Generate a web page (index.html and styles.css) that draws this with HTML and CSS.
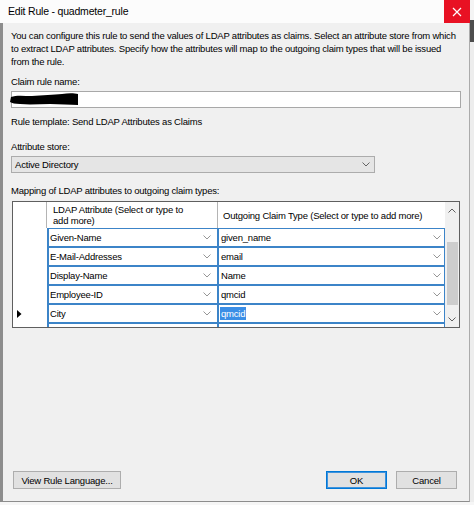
FILE: index.html
```html
<!DOCTYPE html>
<html>
<head>
<meta charset="utf-8">
<link rel="stylesheet" href="styles.css">
</head>
<body>
<div class="window">
  <div class="titlebar">
    <span class="title">Edit Rule - quadmeter_rule</span>
    <div class="close"><svg width="10" height="10" viewBox="0 0 10 10"><path d="M1 1L9 9M9 1L1 9" stroke="#fff" stroke-width="1.2" fill="none"/></svg></div>
  </div>
  <div class="content">
    <p class="desc">You can configure this rule to send the values of LDAP attributes as claims. Select an attribute store from which<br>to extract LDAP attributes. Specify how the attributes will map to the outgoing claim types that will be issued<br>from the rule.</p>
    <p class="lbl m7">Claim rule name:</p>
    <div class="textbox"><svg class="redact" width="69" height="13" viewBox="0 0 69 13"><path d="M1 4 C6 2 14 3 22 3 C32 2 44 2 52 1 C58 0 64 0 68 1 L68 12 C60 12 50 11 40 11 C30 11 20 12 10 11 C5 11 2 10 0 9 Z" fill="#000"/></svg></div>
    <p class="lbl m7">Rule template: Send LDAP Attributes as Claims</p>
    <p class="lbl m12">Attribute store:</p>
    <div class="combo"><span>Active Directory</span><svg class="chev" width="8" height="5" viewBox="0 0 8 5"><path d="M0.5 0.5L4 4L7.5 0.5"/></svg></div>
    <p class="lbl m11">Mapping of LDAP attributes to outgoing claim types:</p>
    <div class="grid">
      <div class="grid-main">
        <div class="head">
          <div class="hcell hrow"></div>
          <div class="hcell hldap">LDAP Attribute (Select or type to<br>add more)</div>
          <div class="hcell hclaim">Outgoing Claim Type (Select or type to add more)</div>
        </div>
        <div class="row">
          <div class="rh"></div>
          <div class="cell ldap"><span>Given-Name</span><svg class="chev" width="8" height="5" viewBox="0 0 8 5"><path d="M0.5 0.5L4 4L7.5 0.5"/></svg></div>
          <div class="cell claim"><span>given_name</span><svg class="chev" width="8" height="5" viewBox="0 0 8 5"><path d="M0.5 0.5L4 4L7.5 0.5"/></svg></div>
        </div>
        <div class="row">
          <div class="rh"></div>
          <div class="cell ldap"><span>E-Mail-Addresses</span><svg class="chev" width="8" height="5" viewBox="0 0 8 5"><path d="M0.5 0.5L4 4L7.5 0.5"/></svg></div>
          <div class="cell claim"><span>email</span><svg class="chev" width="8" height="5" viewBox="0 0 8 5"><path d="M0.5 0.5L4 4L7.5 0.5"/></svg></div>
        </div>
        <div class="row">
          <div class="rh"></div>
          <div class="cell ldap"><span>Display-Name</span><svg class="chev" width="8" height="5" viewBox="0 0 8 5"><path d="M0.5 0.5L4 4L7.5 0.5"/></svg></div>
          <div class="cell claim"><span>Name</span><svg class="chev" width="8" height="5" viewBox="0 0 8 5"><path d="M0.5 0.5L4 4L7.5 0.5"/></svg></div>
        </div>
        <div class="row">
          <div class="rh"></div>
          <div class="cell ldap"><span>Employee-ID</span><svg class="chev" width="8" height="5" viewBox="0 0 8 5"><path d="M0.5 0.5L4 4L7.5 0.5"/></svg></div>
          <div class="cell claim"><span>qmcid</span><svg class="chev" width="8" height="5" viewBox="0 0 8 5"><path d="M0.5 0.5L4 4L7.5 0.5"/></svg></div>
        </div>
        <div class="row">
          <div class="rh"><svg width="5" height="8" viewBox="0 0 5 8"><path d="M0 0L4.5 4L0 8Z" fill="#000"/></svg></div>
          <div class="cell ldap"><span>City</span><svg class="chev" width="8" height="5" viewBox="0 0 8 5"><path d="M0.5 0.5L4 4L7.5 0.5"/></svg></div>
          <div class="cell claim"><span class="sel">qmcid</span><svg class="chev" width="8" height="5" viewBox="0 0 8 5"><path d="M0.5 0.5L4 4L7.5 0.5"/></svg></div>
        </div>
        <div class="row">
          <div class="rh"></div>
          <div class="cell ldap"></div>
          <div class="cell claim"></div>
        </div>
      </div>
      <div class="scrollbar">
        <div class="sb-btn"><svg class="chev dark" width="8" height="5" viewBox="0 0 8 5"><path d="M0.5 4.5L4 1L7.5 4.5"/></svg></div>
        <div class="sb-track"><div class="thumb"></div></div>
        <div class="sb-btn"><svg class="chev dark" width="8" height="5" viewBox="0 0 8 5"><path d="M0.5 0.5L4 4L7.5 0.5"/></svg></div>
      </div>
    </div>
    <div class="buttons">
      <div class="btn view">View Rule Language...</div>
      <div class="btn ok">OK</div>
      <div class="btn cancel">Cancel</div>
    </div>
  </div>
</div>
</body>
</html>
```
FILE: styles.css
```css
* { box-sizing: border-box; margin: 0; padding: 0; }
body {
  width: 474px;
  height: 505px;
  overflow: hidden;
  font-family: "Liberation Sans", Arial, sans-serif;
  font-size: 9.5px;
  letter-spacing: -0.2px;
  line-height: 13px;
  color: #000;
  background: linear-gradient(#f4f4f4 0 20px, #4d4d4d 20px 42px, #ededed 42px 502px, #f6f6f6 502px);
}
.window {
  width: 470px;
  height: 502px;
  display: flex;
  flex-direction: column;
  background: #f0f0f0;
}
.titlebar {
  flex: none;
  height: 23px;
  background: #fcfcfc;
  display: flex;
  align-items: center;
  justify-content: space-between;
  padding-left: 8px;
}
.title { font-size: 10.5px; }
.close {
  width: 26px;
  height: 23px;
  background: #e81123;
  display: flex;
  align-items: center;
  justify-content: center;
}
.content {
  flex: 1;
  display: flex;
  flex-direction: column;
  border-left: 3px solid #8d8d8d;
  border-right: 1px solid #ababab;
  border-bottom: 1px solid #8d8d8d;
  padding: 6px 8px 12px 8px;
}
.desc { white-space: nowrap; }
.m7 { margin-top: 7px; }
.m11 { margin-top: 11px; }
.m12 { margin-top: 12px; }
.textbox {
  margin-top: 3px;
  height: 17px;
  background: #fff;
  border: 1px solid #a8a8a8;
  display: flex;
  align-items: center;
}
.redact { margin-left: -2px; }
.chev { fill: none; stroke: #8a8a8a; stroke-width: 0.9; }
.chev.dark { stroke: #606060; stroke-width: 1; }
.combo {
  margin-top: 3px;
  width: 364px;
  height: 17px;
  background: #e5e5e5;
  border: 1px solid #acacac;
  display: flex;
  align-items: center;
  justify-content: space-between;
  padding: 0 4px 0 3px;
}
.combo .chev { stroke: #555; }
.grid {
  margin: 4px 0 0 1px;
  width: 448px;
  height: 127px;
  border: 1px solid #5f5f5f;
  background: #fff;
  display: flex;
}
.grid-main { flex: 1; overflow: hidden; }
.head, .row {
  display: grid;
  grid-template-columns: 34px 171px 227px;
}
.head { height: 26px; }
.hcell { display: flex; align-items: center; }
.hrow { border-right: 1px solid #b4b4b4; }
.hldap { border-right: 1px solid #b4b4b4; padding-left: 6px; line-height: 11px; }
.hclaim { padding-left: 5px; }
.row { height: 19px; }
.rh { display: flex; align-items: center; padding-left: 4px; }
.cell {
  border: 1px solid #3c84c8;
  display: flex;
  align-items: center;
  justify-content: space-between;
  background: #fff;
}
.ldap { padding: 0 6px 0 1px; border-left-width: 2px; }
.claim { padding: 0 3px 0 2px; }
.sel { background: #3a8ee6; color: #fff; padding: 0 1px; margin-left: -1px; line-height: 13px; }
.scrollbar {
  flex: none;
  width: 14px;
  background: #f0f0f0;
  display: flex;
  flex-direction: column;
}
.sb-btn {
  height: 16px;
  display: flex;
  align-items: center;
  justify-content: center;
}
.sb-track { flex: 1; padding: 24px 1px 0 2px; }
.thumb { height: 63px; background: #cdcdcd; }
.buttons {
  margin-top: auto;
  display: flex;
}
.btn {
  height: 18px;
  background: #e1e1e1;
  border: 1px solid #adadad;
  display: flex;
  align-items: center;
  justify-content: center;
}
.view { width: 108px; margin-left: 2px; }
.ok { width: 61px; margin-left: auto; border-color: #0078d7; box-shadow: inset 0 0 0 1px #3e92dc; }
.cancel { width: 61px; margin-left: 9px; margin-right: 4px; }
```
